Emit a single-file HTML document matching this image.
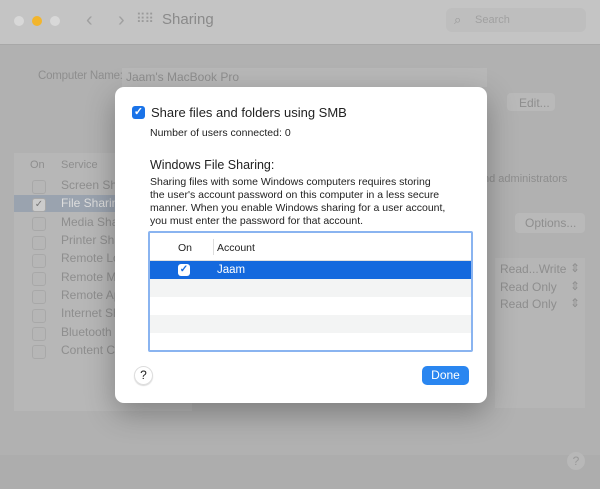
<!DOCTYPE html><html><head><style>
body{margin:0;width:600px;height:489px;position:relative;overflow:hidden;background:#b1b1b1;font-family:"Liberation Sans",sans-serif;}
.a{position:absolute}
.t{color:#8e8e8e;font-size:11px;white-space:nowrap}
.cb{position:absolute;width:12px;height:12px;border:1px solid #a8a8a8;border-radius:3px;background:#b6b6b6}
</style></head><body>
<div class="a" style="left:0;top:0;width:600px;height:44px;background:#c4c4c4;border-bottom:1px solid #a8a8a8"></div>
<div class="a" style="left:14px;top:16px;width:10px;height:10px;border-radius:50%;background:#d8d8d8"></div>
<div class="a" style="left:32px;top:16px;width:10px;height:10px;border-radius:50%;background:#f2b52c"></div>
<div class="a" style="left:50px;top:16px;width:10px;height:10px;border-radius:50%;background:#d8d8d8"></div>
<div class="a t" style="left:86px;top:9px;font-size:20px;color:#a0a0a0">‹</div>
<div class="a t" style="left:118px;top:9px;font-size:20px;color:#a0a0a0">›</div>
<div class="a t" style="left:136px;top:11px;font-size:13px;color:#9a9a9a;letter-spacing:-1px">⠿⠿</div>
<div class="a t" style="left:162px;top:11px;font-size:15px;color:#8a8a8a">Sharing</div>
<div class="a" style="left:446px;top:8px;width:140px;height:24px;border-radius:6px;background:#bebebe"></div>
<div class="a t" style="left:454px;top:12px;font-size:13px;color:#9a9a9a">⌕</div>
<div class="a t" style="left:475px;top:14px;color:#a0a0a0">Search</div>
<div class="a t" style="left:38px;top:70px;font-size:11.5px;letter-spacing:-0.2px">Computer Name:</div>
<div class="a" style="left:122px;top:68px;width:365px;height:19px;background:#b8b8b8"></div>
<div class="a t" style="left:126px;top:70px;font-size:12px">Jaam's MacBook Pro</div>
<div class="a" style="left:507px;top:93px;width:48px;height:18px;border-radius:4px;background:#b9b9b9"></div>
<div class="a t" style="left:519px;top:96px;font-size:12px">Edit...</div>
<div class="a" style="left:14px;top:153px;width:178px;height:258px;background:#b7b7b7"></div>
<div class="a t" style="left:30px;top:159px">On</div><div class="a t" style="left:61px;top:159px">Service</div>
<div class="a" style="left:14px;top:195px;width:178px;height:17px;background:#9aa3af"></div>
<div class="a t" style="left:61px;top:178px;font-size:12px">Screen Sh</div>
<div class="a t" style="left:61px;top:196px;font-size:12px;color:#ddd">File Sharin</div>
<div class="a t" style="left:61px;top:215px;font-size:12px">Media Sha</div>
<div class="a t" style="left:61px;top:233px;font-size:12px">Printer Sha</div>
<div class="a t" style="left:61px;top:251px;font-size:12px">Remote Lo</div>
<div class="a t" style="left:61px;top:270px;font-size:12px">Remote M</div>
<div class="a t" style="left:61px;top:288px;font-size:12px">Remote Ap</div>
<div class="a t" style="left:61px;top:306px;font-size:12px">Internet Sh</div>
<div class="a t" style="left:61px;top:325px;font-size:12px">Bluetooth</div>
<div class="a t" style="left:61px;top:343px;font-size:12px">Content C</div>
<div class="cb" style="left:32px;top:180px"></div>
<div class="cb" style="left:32px;top:198px;background:#ccc;color:#777;font-size:10px;line-height:12px;text-align:center">✓</div>
<div class="cb" style="left:32px;top:217px"></div><div class="cb" style="left:32px;top:236px"></div>
<div class="cb" style="left:32px;top:254px"></div><div class="cb" style="left:32px;top:272px"></div>
<div class="cb" style="left:32px;top:290px"></div><div class="cb" style="left:32px;top:309px"></div>
<div class="cb" style="left:32px;top:327px"></div><div class="cb" style="left:32px;top:345px"></div>
<div class="a t" style="left:483px;top:173px">nd administrators</div>
<div class="a" style="left:515px;top:213px;width:70px;height:20px;border-radius:4px;background:#b9b9b9"></div>
<div class="a t" style="left:525px;top:216px;font-size:12px">Options...</div>
<div class="a" style="left:495px;top:258px;width:90px;height:150px;background:#b6b6b6"></div>
<div class="a t" style="left:500px;top:262px;font-size:12px">Read...Write</div>
<div class="a t" style="left:500px;top:280px;font-size:12px">Read Only</div>
<div class="a t" style="left:500px;top:297px;font-size:12px">Read Only</div>
<div class="a t" style="left:570px;top:261px;font-size:12px">⇕</div>
<div class="a t" style="left:570px;top:279px;font-size:12px">⇕</div>
<div class="a t" style="left:570px;top:296px;font-size:12px">⇕</div>
<div class="a" style="left:0;top:455px;width:600px;height:34px;background:#adadad"></div>
<div class="a" style="left:567px;top:452px;width:18px;height:18px;border-radius:50%;background:#b8b8b8;color:#999;font-size:12px;text-align:center;line-height:18px">?</div>

<div class="a" style="left:115px;top:87px;width:372px;height:316px;background:#fff;border-radius:9px;box-shadow:0 10px 30px rgba(0,0,0,.3)"></div>
<div class="a" style="left:132px;top:106px;width:13px;height:13px;border-radius:3px;background:#1a73e8;color:#fff;font-size:11px;line-height:13px;text-align:center;font-weight:bold">✓</div>
<div class="a" style="left:151px;top:105px;font-size:13px;color:#222">Share files and folders using SMB</div>
<div class="a" style="left:150px;top:127px;font-size:10.5px;color:#222">Number of users connected: 0</div>
<div class="a" style="left:150px;top:158px;font-size:12.5px;color:#222">Windows File Sharing:</div>
<div class="a" style="left:150px;top:176px;font-size:10.5px;line-height:13px;color:#222;width:320px">Sharing files with some Windows computers requires storing<br>the user's account password on this computer in a less secure<br>manner. When you enable Windows sharing for a user account,<br>you must enter the password for that account.</div>
<div class="a" style="left:148px;top:231px;width:321px;height:117px;border:2px solid #8ab4f0;border-radius:2px;background:#fff;overflow:hidden">
<div style="height:27px;border-bottom:1px solid #e0e0e0;position:relative;font-size:10.5px;color:#222">
<span class="a" style="left:28px;top:9px">On</span><span class="a" style="left:63px;top:6px;width:1px;height:16px;background:#ddd"></span><span class="a" style="left:67px;top:9px">Account</span></div>
<div style="height:18px;background:#1469de;position:relative"><span class="a" style="left:28px;top:3px;width:12px;height:12px;border-radius:3px;background:#fff;color:#1469de;font-size:10px;line-height:12px;text-align:center;font-weight:bold">✓</span><span class="a" style="left:67px;top:3px;color:#fff;font-size:11.5px">Jaam</span></div>
<div style="height:18px;background:#f3f4f4"></div><div style="height:18px"></div><div style="height:18px;background:#f3f4f4"></div>
</div>
<div class="a" style="left:134px;top:366px;width:17px;height:17px;border-radius:50%;border:1px solid #ddd;box-shadow:0 1px 1px rgba(0,0,0,.15);font-size:12px;text-align:center;line-height:17px;color:#222">?</div>
<div class="a" style="left:422px;top:366px;width:47px;height:19px;border-radius:5px;background:#2a86f0;color:#fff;font-size:12px;text-align:center;line-height:19px">Done</div>
</body></html>
